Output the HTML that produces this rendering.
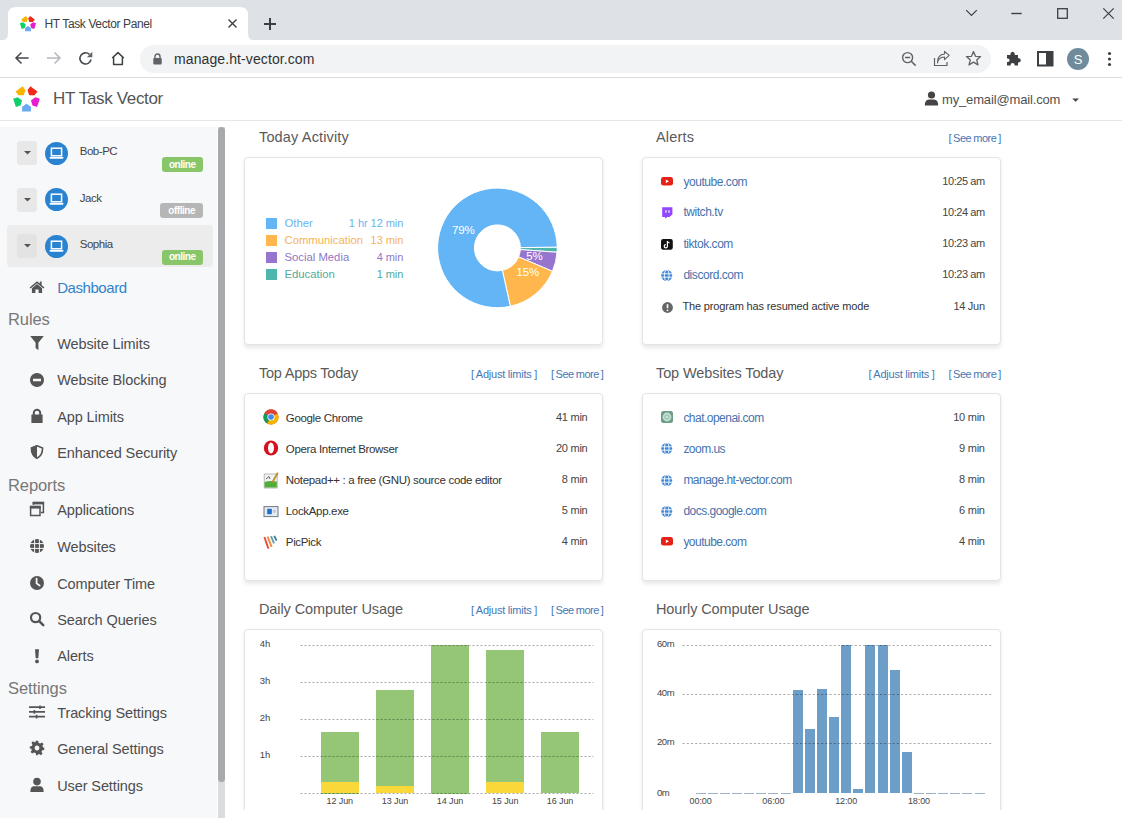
<!DOCTYPE html><html><head><meta charset="utf-8"><style>
*{box-sizing:border-box;margin:0;padding:0}
html,body{width:1122px;height:821px;overflow:hidden;background:#fff;font-family:"Liberation Sans",sans-serif;position:relative}
.t{position:absolute;white-space:nowrap;line-height:normal}
.b{position:absolute}
.s{position:absolute;overflow:visible}
</style></head><body><svg width="0" height="0" style="position:absolute">
<defs>
<symbol id="i-home" viewBox="0 0 16 16"><path fill="#555" d="M8 2.2 L0.6 8.4 L1.6 9.5 L8 4.2 L14.4 9.5 L15.4 8.4 L12.6 6.1 L12.6 2.6 L10.8 2.6 L10.8 4.6 Z M2.9 9.3 L8 5.1 L13.1 9.3 L13.1 14 L9.6 14 L9.6 10.6 L6.4 10.6 L6.4 14 L2.9 14 Z"/></symbol>
<symbol id="i-filter" viewBox="0 0 16 16"><path fill="#555" d="M1.2 1 L14.8 1 L9.4 7.8 L9.4 15.2 L6.6 13 L6.6 7.8 Z"/></symbol>
<symbol id="i-minus" viewBox="0 0 16 16"><path fill="#555" fill-rule="evenodd" d="M8 1 A7 7 0 1 1 7.99 1 Z M4 6.8 L12 6.8 L12 9.2 L4 9.2 Z"/></symbol>
<symbol id="i-lock" viewBox="0 0 16 16"><path fill="#555" d="M2.4 7.2 Q2.4 6.6 3 6.6 L13 6.6 Q13.6 6.6 13.6 7.2 L13.6 14.4 Q13.6 15 13 15 L3 15 Q2.4 15 2.4 14.4 Z"/><path fill="none" stroke="#555" stroke-width="2" d="M4.8 7 L4.8 5 A3.2 3.2 0 0 1 11.2 5 L11.2 7"/></symbol>
<symbol id="i-shield" viewBox="0 0 16 16"><path fill="none" stroke="#555" stroke-width="1.6" d="M8 1.8 L13.6 4 C13.6 9 11.4 12.6 8 14.2 C4.6 12.6 2.4 9 2.4 4 Z"/><path fill="#555" d="M8 1 L2 3.4 C2 9.4 4.4 13.2 8 15 Z"/></symbol>
<symbol id="i-apps" viewBox="0 0 16 16"><path fill="none" stroke="#555" stroke-width="1.5" d="M1.6 5.6 L11 5.6 L11 14.6 L1.6 14.6 Z"/><path fill="#555" d="M0.9 4.9 L11.7 4.9 L11.7 7.6 L0.9 7.6 Z"/><path fill="none" stroke="#555" stroke-width="1.5" d="M4.4 3.8 L4.4 1.6 L14.4 1.6 L14.4 11.4 L12 11.4"/><path fill="#555" d="M3.7 0.9 L15.1 0.9 L15.1 3.4 L3.7 3.4 Z"/></symbol>
<symbol id="i-globe" viewBox="0 0 16 16"><circle cx="8" cy="8" r="7" fill="#555"/><path fill="none" stroke="#f7f8fa" stroke-width="1" d="M1 5.6 L15 5.6 M1 10.4 L15 10.4 M5.6 1 L5.6 15 M10.4 1 L10.4 15"/></symbol>
<symbol id="i-clock" viewBox="0 0 16 16"><circle cx="8" cy="8" r="7" fill="#555"/><path fill="none" stroke="#f7f8fa" stroke-width="1.8" stroke-linecap="round" d="M7.6 3.6 L7.6 8.4 L10.6 10.6"/></symbol>
<symbol id="i-search" viewBox="0 0 16 16"><circle cx="6.6" cy="6.6" r="4.6" fill="none" stroke="#555" stroke-width="2.2"/><path stroke="#555" stroke-width="2.6" stroke-linecap="round" d="M10.2 10.2 L14.2 14.2"/></symbol>
<symbol id="i-excl" viewBox="0 0 16 16"><path fill="#555" d="M6 1.2 L10 1.2 L9.3 10.2 L6.7 10.2 Z"/><circle cx="8" cy="13.4" r="1.9" fill="#555"/></symbol>
<symbol id="i-sliders" viewBox="0 0 16 16"><path stroke="#555" stroke-width="1.7" d="M0 3.2 L16 3.2 M0 7.9 L16 7.9 M0 12.6 L16 12.6"/><path stroke="#555" stroke-width="1.6" d="M11 1.4 L11 5 M5.4 6.1 L5.4 9.7 M7.6 10.8 L7.6 14.4"/></symbol>
<symbol id="i-cog" viewBox="0 0 16 16"><path fill="#555" fill-rule="evenodd" d="M6.8 0.8 L9.2 0.8 L9.6 2.9 L11.2 3.6 L13 2.4 L14.6 4 L13.4 5.8 L14.1 7.4 L15.2 7.6 L15.2 9.9 L13.2 10.3 L12.5 11.9 L13.6 13.6 L11.9 15.2 L10.2 14 L8.9 14.6 L8.7 15.2 L7.3 15.2 L6.6 13.1 L4.9 12.4 L3.2 13.6 L1.6 12 L2.8 10.2 L2.1 8.6 L0.8 8.4 L0.8 6.6 L2.8 6.1 L3.5 4.5 L2.4 2.8 L4 1.2 L5.8 2.4 L6.4 2.1 Z M8 5.6 A2.4 2.4 0 1 0 8.01 5.6 Z"/></symbol>
<symbol id="i-user" viewBox="0 0 16 16"><circle cx="8" cy="4.6" r="3.8" fill="#555"/><path fill="#555" d="M1.4 14 C1.4 10.6 3.4 9.2 5.2 9.2 L10.8 9.2 C12.6 9.2 14.6 10.6 14.6 14 L14.6 15 L1.4 15 Z"/></symbol>
<symbol id="i-laptop" viewBox="0 0 16 16"><path fill="#fff" d="M3 3 L13 3 L13 10 L3 10 Z M4.2 4.2 L4.2 8.8 L11.8 8.8 L11.8 4.2 Z" fill-rule="evenodd"/><path fill="#fff" d="M1.5 10.6 L14.5 10.6 L14.5 11.4 Q14.5 12.2 13.7 12.2 L2.3 12.2 Q1.5 12.2 1.5 11.4 Z"/></symbol>
</defs></svg>
<div class="b" style="left:0px;top:0px;width:1122px;height:40px;background:#dee1e6;"></div>
<svg class="s" style="left:0px;top:0px" width="260" height="41" viewBox="0 0 260 41"><path fill="#fff" d="M0 41 Q8 41 8 33 L8 15 Q8 7 16 7 L240 7 Q248 7 248 15 L248 33 Q248 41 256 41 Z"/></svg>
<div class="b" style="left:0px;top:40px;width:1122px;height:37px;background:#fff;"></div>
<div class="b" style="left:0px;top:77px;width:1122px;height:1px;background:#dadce0;"></div>
<svg class="s" style="left:20px;top:16px" width="16" height="16" viewBox="0 0 16 16"><g transform="translate(8,7.8) rotate(-126) scale(0.6) translate(8.2,0)"><path d="M-4.4 0 L-1 -4.9 L4.4 -4.9 L4.4 4.9 L-1 4.9 Z" fill="#f7b500"/></g><g transform="translate(8,7.8) rotate(-54) scale(0.6) translate(8.2,0)"><path d="M-4.4 0 L-1 -4.9 L4.4 -4.9 L4.4 4.9 L-1 4.9 Z" fill="#ee2a1b"/></g><g transform="translate(8,7.8) rotate(18) scale(0.6) translate(8.2,0)"><path d="M-4.4 0 L-1 -4.9 L4.4 -4.9 L4.4 4.9 L-1 4.9 Z" fill="#e81ccf"/></g><g transform="translate(8,7.8) rotate(90) scale(0.6) translate(8.2,0)"><path d="M-4.4 0 L-1 -4.9 L4.4 -4.9 L4.4 4.9 L-1 4.9 Z" fill="#6aaaf0"/></g><g transform="translate(8,7.8) rotate(162) scale(0.6) translate(8.2,0)"><path d="M-4.4 0 L-1 -4.9 L4.4 -4.9 L4.4 4.9 L-1 4.9 Z" fill="#0fcf6a"/></g></svg>
<div class="t" style="top:16.75px;font-size:12px;color:#3c4043;left:44.60px;letter-spacing:-0.385px">HT Task Vector Panel</div>
<svg class="s" style="left:227px;top:18px" width="11" height="11" viewBox="0 0 11 11"><path d="M1.5 1.5 L9.5 9.5 M9.5 1.5 L1.5 9.5" stroke="#3c4043" stroke-width="1.4"/></svg>
<svg class="s" style="left:263px;top:17px" width="14" height="14" viewBox="0 0 14 14"><path d="M7 1 L7 13 M1 7 L13 7" stroke="#3c4043" stroke-width="2"/></svg>
<svg class="s" style="left:965px;top:8px" width="13" height="10" viewBox="0 0 13 10"><path d="M1.2 2.2 L6.5 7.5 L11.8 2.2" fill="none" stroke="#3c4043" stroke-width="1.2"/></svg>
<svg class="s" style="left:1011px;top:12px" width="11" height="3" viewBox="0 0 11 3"><path d="M0.3 1.5 L10.7 1.5" stroke="#3c4043" stroke-width="1.4"/></svg>
<svg class="s" style="left:1057px;top:8px" width="11" height="11" viewBox="0 0 11 11"><rect x="0.7" y="0.7" width="9.6" height="9.6" fill="none" stroke="#3c4043" stroke-width="1.3"/></svg>
<svg class="s" style="left:1102px;top:7px" width="13" height="13" viewBox="0 0 13 13"><path d="M1.3 1.3 L11.7 11.7 M11.7 1.3 L1.3 11.7" stroke="#3c4043" stroke-width="1.2"/></svg>
<svg class="s" style="left:14px;top:51px" width="16" height="14" viewBox="0 0 16 14"><path d="M14.6 7 L2 7 M7.5 1.5 L2 7 L7.5 12.5" fill="none" stroke="#45484c" stroke-width="1.5"/></svg>
<svg class="s" style="left:46px;top:51px" width="16" height="14" viewBox="0 0 16 14"><path d="M1 7 L14 7 M8.5 1.5 L14 7 L8.5 12.5" fill="none" stroke="#b5b8bc" stroke-width="1.5"/></svg>
<svg class="s" style="left:78px;top:51px" width="16" height="15" viewBox="0 0 16 15"><path d="M13 8.5 A5.6 5.6 0 1 1 11.4 3.4" fill="none" stroke="#45484c" stroke-width="1.6"/><path d="M14.3 0.8 L14.3 6.2 L8.9 6.2 Z" fill="#5f6368"/></svg>
<svg class="s" style="left:110px;top:51px" width="16" height="15" viewBox="0 0 16 15"><path d="M2.2 7 L8 1.6 L13.8 7 M3.6 6 L3.6 13.6 L12.4 13.6 L12.4 6" fill="none" stroke="#3c4043" stroke-width="1.5" stroke-linejoin="round"/></svg>
<div class="b" style="left:140px;top:45px;width:851px;height:28px;background:#f1f3f4;border-radius:14px"></div>
<svg class="s" style="left:152px;top:53px" width="11" height="12" viewBox="0 0 11 12"><path d="M3 5 L3 3.5 A2.5 2.5 0 0 1 8 3.5 L8 5" fill="none" stroke="#5f6368" stroke-width="1.4"/><rect x="1.3" y="5" width="8.4" height="6.5" rx="1" fill="#5f6368"/></svg>
<div class="t" style="top:51.31px;font-size:14px;color:#303134;left:174.00px;letter-spacing:0.1px">manage.ht-vector.com</div>
<svg class="s" style="left:901px;top:51px" width="16" height="16" viewBox="0 0 16 16"><circle cx="6.6" cy="6.6" r="5" fill="none" stroke="#5f6368" stroke-width="1.4"/><path d="M4 6.6 L9.2 6.6 M10.3 10.3 L14.6 14.6" stroke="#5f6368" stroke-width="1.5"/></svg>
<svg class="s" style="left:933px;top:51px" width="18" height="16" viewBox="0 0 18 16"><path d="M1.5 7 L1.5 14.5 L14 14.5 L14 11" fill="none" stroke="#5f6368" stroke-width="1.2"/><path d="M4.5 12 Q5 6.2 11.5 6 L11.5 8.6 L16.2 4.4 L11.5 0.4 L11.5 3 Q4.2 3.6 4.5 12 Z" fill="none" stroke="#5f6368" stroke-width="1.1" stroke-linejoin="round"/></svg>
<svg class="s" style="left:965px;top:50px" width="17" height="17" viewBox="0 0 17 17"><path d="M8.5 1.5 L10.5 6.3 L15.6 6.6 L11.7 9.9 L13 14.9 L8.5 12.1 L4 14.9 L5.3 9.9 L1.4 6.6 L6.5 6.3 Z" fill="none" stroke="#5f6368" stroke-width="1.3" stroke-linejoin="round"/></svg>
<svg class="s" style="left:1005px;top:50px" width="17" height="17" viewBox="0 0 17 17"><path d="M2 5 L5.5 5 Q5 2 7.6 1.8 Q10.2 2 9.7 5 L13 5 L13 8.2 Q15.8 7.8 15.8 10.3 Q15.8 12.8 13 12.4 L13 15.6 L9.5 15.6 Q10 13 7.6 13 Q5.2 13 5.7 15.6 L2 15.6 L2 12 Q4.6 12.4 4.6 10.3 Q4.6 8.2 2 8.6 Z" fill="#3c4043"/></svg>
<svg class="s" style="left:1037px;top:51px" width="17" height="16" viewBox="0 0 17 16"><rect x="1" y="1" width="14.5" height="13.5" fill="none" stroke="#3c4043" stroke-width="2"/><rect x="9" y="1" width="6.5" height="13.5" fill="#3c4043"/></svg>
<svg class="s" style="left:1067px;top:48px" width="22" height="22" viewBox="0 0 22 22"><circle cx="11" cy="11" r="11" fill="#6f8b9c"/></svg>
<div class="t" style="top:52.03px;font-size:13px;color:#fff;left:878.00px;width:400px;text-align:center">S</div>
<svg class="s" style="left:1107px;top:51px" width="5" height="16" viewBox="0 0 5 16"><circle cx="2.5" cy="2.5" r="1.6" fill="#3c4043"/><circle cx="2.5" cy="8" r="1.6" fill="#3c4043"/><circle cx="2.5" cy="13.5" r="1.6" fill="#3c4043"/></svg>
<div class="b" style="left:0px;top:120px;width:1122px;height:1px;background:#e6e6e6;"></div>
<svg class="s" style="left:12px;top:85px" width="29" height="29" viewBox="0 0 29 29"><g transform="translate(14.5,14.0) rotate(-126) scale(0.9) translate(9.6,0)"><path d="M-4.4 0 L-1 -4.9 L4.4 -4.9 L4.4 4.9 L-1 4.9 Z" fill="#f7b500"/></g><g transform="translate(14.5,14.0) rotate(-54) scale(0.9) translate(9.6,0)"><path d="M-4.4 0 L-1 -4.9 L4.4 -4.9 L4.4 4.9 L-1 4.9 Z" fill="#ee2a1b"/></g><g transform="translate(14.5,14.0) rotate(18) scale(0.9) translate(9.6,0)"><path d="M-4.4 0 L-1 -4.9 L4.4 -4.9 L4.4 4.9 L-1 4.9 Z" fill="#e81ccf"/></g><g transform="translate(14.5,14.0) rotate(90) scale(0.9) translate(9.6,0)"><path d="M-4.4 0 L-1 -4.9 L4.4 -4.9 L4.4 4.9 L-1 4.9 Z" fill="#6aaaf0"/></g><g transform="translate(14.5,14.0) rotate(162) scale(0.9) translate(9.6,0)"><path d="M-4.4 0 L-1 -4.9 L4.4 -4.9 L4.4 4.9 L-1 4.9 Z" fill="#0fcf6a"/></g></svg>
<div class="t" style="top:88.54px;font-size:17px;color:#555;left:53.00px;letter-spacing:-0.34px">HT Task Vector</div>
<svg class="s" style="left:924px;top:91px" width="15" height="15" viewBox="0 0 15 15"><circle cx="7.5" cy="4" r="3.6" fill="#444"/><path d="M0.8 14.6 Q0.8 8.6 5 8.6 L10 8.6 Q14.2 8.6 14.2 14.6 Z" fill="#444"/></svg>
<div class="t" style="top:92.03px;font-size:13px;color:#505050;left:942.00px;letter-spacing:-0.15px">my_email@mail.com</div>
<svg class="s" style="left:1072px;top:98px" width="8" height="5" viewBox="0 0 8 5"><path d="M0.2 0.4 L7 0.4 L3.6 3.8 Z" fill="#444"/></svg>
<div class="b" style="left:0px;top:127px;width:217px;height:691px;background:#f7f8fa;"></div>
<div class="b" style="left:218px;top:127px;width:7px;height:691px;background:#dcdcdc;"></div>
<div class="b" style="left:218px;top:127px;width:7px;height:655px;background:#a8a9ac;border-radius:3.5px"></div>
<div class="b" style="left:17px;top:141px;width:20px;height:24px;background:#e8e8e8;border-radius:3px"></div>
<svg class="s" style="left:24px;top:151px" width="7" height="4" viewBox="0 0 7 4"><path d="M0 0 L7 0 L3.5 3.5 Z" fill="#555"/></svg>
<svg class="s" style="left:45.1px;top:141.5px" width="23" height="23" viewBox="0 0 23 23"><circle cx="11.5" cy="11.5" r="11.5" fill="#2a83d1"/><rect x="6.4" y="6.2" width="10.2" height="7.6" fill="none" stroke="#fff" stroke-width="1.5"/><path d="M4.6 15 L18.4 15 L18.4 15.8 Q18.4 16.8 17.4 16.8 L5.6 16.8 Q4.6 16.8 4.6 15.8 Z" fill="#fff"/></svg>
<div class="t" style="top:145.01px;font-size:11.5px;color:#444;left:79.70px;letter-spacing:-0.46px">Bob-PC</div>
<div class="b" style="left:161.5px;top:157px;width:41.5px;height:15px;background:#88c669;border-radius:3px"></div>
<div class="t" style="top:158.79px;font-size:10px;color:#fff;left:-17.75px;width:400px;text-align:center;letter-spacing:-0.45px;font-weight:bold">online</div>
<div class="b" style="left:17px;top:187.5px;width:20px;height:24px;background:#e8e8e8;border-radius:3px"></div>
<svg class="s" style="left:24px;top:197.5px" width="7" height="4" viewBox="0 0 7 4"><path d="M0 0 L7 0 L3.5 3.5 Z" fill="#555"/></svg>
<svg class="s" style="left:45.1px;top:188.0px" width="23" height="23" viewBox="0 0 23 23"><circle cx="11.5" cy="11.5" r="11.5" fill="#2a83d1"/><rect x="6.4" y="6.2" width="10.2" height="7.6" fill="none" stroke="#fff" stroke-width="1.5"/><path d="M4.6 15 L18.4 15 L18.4 15.8 Q18.4 16.8 17.4 16.8 L5.6 16.8 Q4.6 16.8 4.6 15.8 Z" fill="#fff"/></svg>
<div class="t" style="top:191.61px;font-size:11.5px;color:#444;left:79.70px;letter-spacing:-0.46px">Jack</div>
<div class="b" style="left:160.2px;top:203.3px;width:43px;height:15px;background:#b6b6b6;border-radius:3px"></div>
<div class="t" style="top:205.09px;font-size:10px;color:#fff;left:-18.30px;width:400px;text-align:center;letter-spacing:-0.45px;font-weight:bold">offline</div>
<div class="b" style="left:7px;top:225px;width:206px;height:42px;background:#ececec;border-radius:4px"></div>
<div class="b" style="left:17px;top:234px;width:20px;height:24px;background:#e3e3e3;border-radius:3px"></div>
<svg class="s" style="left:24px;top:244px" width="7" height="4" viewBox="0 0 7 4"><path d="M0 0 L7 0 L3.5 3.5 Z" fill="#555"/></svg>
<svg class="s" style="left:45.1px;top:234.5px" width="23" height="23" viewBox="0 0 23 23"><circle cx="11.5" cy="11.5" r="11.5" fill="#2a83d1"/><rect x="6.4" y="6.2" width="10.2" height="7.6" fill="none" stroke="#fff" stroke-width="1.5"/><path d="M4.6 15 L18.4 15 L18.4 15.8 Q18.4 16.8 17.4 16.8 L5.6 16.8 Q4.6 16.8 4.6 15.8 Z" fill="#fff"/></svg>
<div class="t" style="top:238.01px;font-size:11.5px;color:#444;left:79.70px;letter-spacing:-0.46px">Sophia</div>
<div class="b" style="left:161.5px;top:249.7px;width:41.5px;height:15px;background:#88c669;border-radius:3px"></div>
<div class="t" style="top:251.49px;font-size:10px;color:#fff;left:-17.75px;width:400px;text-align:center;letter-spacing:-0.45px;font-weight:bold">online</div>
<div class="t" style="top:278.88px;font-size:15px;color:#3282c8;left:57.20px;letter-spacing:-0.44px">Dashboard</div>
<svg class="s" style="left:28.5px;top:278.9px" width="16" height="16" viewBox="0 0 16 16"><use href="#i-home"/></svg>
<div class="t" style="top:335.95px;font-size:14.5px;color:#4d4d4d;left:57.20px;letter-spacing:-0.1px">Website Limits</div>
<svg class="s" style="left:28.5px;top:334.9px" width="16" height="16" viewBox="0 0 16 16"><use href="#i-filter"/></svg>
<div class="t" style="top:372.45px;font-size:14.5px;color:#4d4d4d;left:57.20px;letter-spacing:-0.1px">Website Blocking</div>
<svg class="s" style="left:28.5px;top:372.2px" width="16" height="16" viewBox="0 0 16 16"><use href="#i-minus"/></svg>
<div class="t" style="top:409.15px;font-size:14.5px;color:#4d4d4d;left:57.20px;letter-spacing:-0.1px">App Limits</div>
<svg class="s" style="left:28.5px;top:408px" width="16" height="16" viewBox="0 0 16 16"><use href="#i-lock"/></svg>
<div class="t" style="top:445.25px;font-size:14.5px;color:#4d4d4d;left:57.20px;letter-spacing:-0.1px">Enhanced Security</div>
<svg class="s" style="left:28.5px;top:443.6px" width="16" height="16" viewBox="0 0 16 16"><use href="#i-shield"/></svg>
<div class="t" style="top:501.55px;font-size:14.5px;color:#4d4d4d;left:57.20px;letter-spacing:-0.1px">Applications</div>
<svg class="s" style="left:28.5px;top:501.3px" width="16" height="16" viewBox="0 0 16 16"><use href="#i-apps"/></svg>
<div class="t" style="top:538.55px;font-size:14.5px;color:#4d4d4d;left:57.20px;letter-spacing:-0.1px">Websites</div>
<svg class="s" style="left:28.5px;top:538.1px" width="16" height="16" viewBox="0 0 16 16"><use href="#i-globe"/></svg>
<div class="t" style="top:575.55px;font-size:14.5px;color:#4d4d4d;left:57.20px;letter-spacing:-0.1px">Computer Time</div>
<svg class="s" style="left:28.5px;top:575.1px" width="16" height="16" viewBox="0 0 16 16"><use href="#i-clock"/></svg>
<div class="t" style="top:611.65px;font-size:14.5px;color:#4d4d4d;left:57.20px;letter-spacing:-0.1px">Search Queries</div>
<svg class="s" style="left:28.5px;top:611.3px" width="16" height="16" viewBox="0 0 16 16"><use href="#i-search"/></svg>
<div class="t" style="top:648.15px;font-size:14.5px;color:#4d4d4d;left:57.20px;letter-spacing:-0.1px">Alerts</div>
<svg class="s" style="left:28.5px;top:647.7px" width="16" height="16" viewBox="0 0 16 16"><use href="#i-excl"/></svg>
<div class="t" style="top:704.65px;font-size:14.5px;color:#4d4d4d;left:57.20px;letter-spacing:-0.1px">Tracking Settings</div>
<svg class="s" style="left:28.5px;top:704.2px" width="16" height="16" viewBox="0 0 16 16"><use href="#i-sliders"/></svg>
<div class="t" style="top:741.15px;font-size:14.5px;color:#4d4d4d;left:57.20px;letter-spacing:-0.1px">General Settings</div>
<svg class="s" style="left:28.5px;top:740.1px" width="16" height="16" viewBox="0 0 16 16"><use href="#i-cog"/></svg>
<div class="t" style="top:777.65px;font-size:14.5px;color:#4d4d4d;left:57.20px;letter-spacing:-0.1px">User Settings</div>
<svg class="s" style="left:28.5px;top:776.6px" width="16" height="16" viewBox="0 0 16 16"><use href="#i-user"/></svg>
<div class="t" style="top:309.60px;font-size:16.5px;color:#777;left:8.00px;letter-spacing:-0.1px">Rules</div>
<div class="t" style="top:476.20px;font-size:16.5px;color:#777;left:8.00px;letter-spacing:-0.1px">Reports</div>
<div class="t" style="top:678.60px;font-size:16.5px;color:#777;left:8.00px;letter-spacing:-0.1px">Settings</div>
<div style="position:absolute;left:226px;top:121px;width:896px;height:689px;overflow:hidden">
<div style="position:absolute;left:-226px;top:-121px;width:1122px;height:821px">
<div class="b" style="left:244px;top:157px;width:359px;height:188px;background:#fff;border:1px solid #e4e4e4;border-radius:4px;box-shadow:0 2.5px 4px rgba(0,0,0,0.09)"></div>
<div class="b" style="left:642px;top:157px;width:359px;height:188px;background:#fff;border:1px solid #e4e4e4;border-radius:4px;box-shadow:0 2.5px 4px rgba(0,0,0,0.09)"></div>
<div class="b" style="left:244px;top:393px;width:359px;height:188px;background:#fff;border:1px solid #e4e4e4;border-radius:4px;box-shadow:0 2.5px 4px rgba(0,0,0,0.09)"></div>
<div class="b" style="left:642px;top:393px;width:359px;height:188px;background:#fff;border:1px solid #e4e4e4;border-radius:4px;box-shadow:0 2.5px 4px rgba(0,0,0,0.09)"></div>
<div class="b" style="left:244px;top:629px;width:359px;height:300px;background:#fff;border:1px solid #e4e4e4;border-radius:4px;box-shadow:0 2.5px 4px rgba(0,0,0,0.09)"></div>
<div class="b" style="left:642px;top:629px;width:359px;height:300px;background:#fff;border:1px solid #e4e4e4;border-radius:4px;box-shadow:0 2.5px 4px rgba(0,0,0,0.09)"></div>
<div class="t" style="top:128.85px;font-size:14.5px;color:#5a5a5a;left:259.00px;letter-spacing:0.15px">Today Activity</div>
<div class="t" style="top:128.85px;font-size:14.5px;color:#5a5a5a;left:656.00px;letter-spacing:0.2px">Alerts</div>
<div class="t" style="top:365.15px;font-size:14.5px;color:#5a5a5a;left:259.00px;letter-spacing:-0.23px">Top Apps Today</div>
<div class="t" style="top:365.15px;font-size:14.5px;color:#5a5a5a;left:656.00px;letter-spacing:-0.1px">Top Websites Today</div>
<div class="t" style="top:600.75px;font-size:14.5px;color:#5a5a5a;left:259.00px;letter-spacing:-0.1px">Daily Computer Usage</div>
<div class="t" style="top:600.75px;font-size:14.5px;color:#5a5a5a;left:656.00px;letter-spacing:-0.1px">Hourly Computer Usage</div>
<div class="t" style="top:132.17px;font-size:11px;color:#4677b3;right:121.00px;letter-spacing:-0.42px;word-spacing:-0.8px">[ See more ]</div>
<div class="t" style="top:368.37px;font-size:11px;color:#4677b3;right:518.50px;letter-spacing:-0.42px;word-spacing:-0.8px">[ See more ]</div>
<div class="t" style="top:368.37px;font-size:11px;color:#4677b3;right:585.00px;letter-spacing:-0.2px;word-spacing:-0.3px">[ Adjust limits ]</div>
<div class="t" style="top:368.37px;font-size:11px;color:#4677b3;right:121.00px;letter-spacing:-0.42px;word-spacing:-0.8px">[ See more ]</div>
<div class="t" style="top:368.37px;font-size:11px;color:#4677b3;right:187.50px;letter-spacing:-0.2px;word-spacing:-0.3px">[ Adjust limits ]</div>
<div class="t" style="top:603.87px;font-size:11px;color:#4677b3;right:518.50px;letter-spacing:-0.42px;word-spacing:-0.8px">[ See more ]</div>
<div class="t" style="top:603.87px;font-size:11px;color:#4677b3;right:585.00px;letter-spacing:-0.2px;word-spacing:-0.3px">[ Adjust limits ]</div>
<div class="b" style="left:266px;top:218px;width:11px;height:11px;background:#64b5f6;"></div>
<div class="t" style="top:216.99px;font-size:11.3px;color:#6ab4ee;left:284.50px;letter-spacing:0px">Other</div>
<div class="t" style="top:217.27px;font-size:11px;color:#6ab4ee;right:718.70px;letter-spacing:-0.05px">1 hr 12 min</div>
<div class="b" style="left:266px;top:235px;width:11px;height:11px;background:#ffb74d;"></div>
<div class="t" style="top:233.99px;font-size:11.3px;color:#f7b35a;left:284.50px;letter-spacing:0px">Communication</div>
<div class="t" style="top:234.27px;font-size:11px;color:#f7b35a;right:718.70px;letter-spacing:-0.05px">13 min</div>
<div class="b" style="left:266px;top:252px;width:11px;height:11px;background:#9575cd;"></div>
<div class="t" style="top:250.99px;font-size:11.3px;color:#8f78c4;left:284.50px;letter-spacing:0px">Social Media</div>
<div class="t" style="top:251.27px;font-size:11px;color:#8f78c4;right:718.70px;letter-spacing:-0.05px">4 min</div>
<div class="b" style="left:266px;top:269px;width:11px;height:11px;background:#4db6ac;"></div>
<div class="t" style="top:267.99px;font-size:11.3px;color:#52aaa1;left:284.50px;letter-spacing:0px">Education</div>
<div class="t" style="top:268.27px;font-size:11px;color:#52aaa1;right:718.70px;letter-spacing:-0.05px">1 min</div>
<svg class="s" style="left:0;top:0" width="1122" height="821"><path d="M557.19 247.07 A59.8 59.8 0 0 1 557.04 252.28 L520.34 249.58 A23 23 0 0 0 520.40 247.58 Z" fill="#4db6ac" stroke="#fff" stroke-width="1"/><path d="M557.04 252.28 A59.8 59.8 0 0 1 552.45 271.27 L518.57 256.89 A23 23 0 0 0 520.34 249.58 Z" fill="#9575cd" stroke="#fff" stroke-width="1"/><path d="M552.45 271.27 A59.8 59.8 0 0 1 510.34 306.28 L502.38 270.35 A23 23 0 0 0 518.57 256.89 Z" fill="#ffb74d" stroke="#fff" stroke-width="1"/><path d="M510.34 306.28 A59.8 59.8 0 1 1 557.19 247.07 L520.40 247.58 A23 23 0 1 0 502.38 270.35 Z" fill="#64b5f6" stroke="#fff" stroke-width="1"/></svg>
<div class="t" style="top:223.71px;font-size:11.5px;color:#fff;left:263.30px;width:400px;text-align:center;letter-spacing:-0.2px">79%</div>
<div class="t" style="top:250.21px;font-size:11.5px;color:#fff;left:334.40px;width:400px;text-align:center;letter-spacing:-0.2px">5%</div>
<div class="t" style="top:265.51px;font-size:11.5px;color:#fff;left:327.80px;width:400px;text-align:center;letter-spacing:-0.2px">15%</div>
<svg class="s" style="left:661px;top:177px" width="12" height="9" viewBox="0 0 12 9"><rect x="0" y="0" width="12" height="8.6" rx="2.4" fill="#e62117"/><path d="M4.8 2.4 L8 4.3 L4.8 6.2 Z" fill="#fff"/></svg>
<div class="t" style="top:174.55px;font-size:12px;color:#4673ad;left:683.40px;letter-spacing:-0.45px">youtube.com</div>
<div class="t" style="top:174.67px;font-size:11px;color:#444;right:137.30px;letter-spacing:-0.44px">10:25 am</div>
<svg class="s" style="left:661px;top:207px" width="12" height="12" viewBox="0 0 12 12"><path d="M1.2 0.3 L11.4 0.3 L11.4 7.4 L8.4 10 L6.2 10 L4 11.8 L4 10 L1.2 10 Z" fill="#9146ff"/><path d="M5 3.2 L5 5.8 M8 3.2 L8 5.8" stroke="#fff" stroke-width="1.2"/></svg>
<div class="t" style="top:205.45px;font-size:12px;color:#4673ad;left:683.40px;letter-spacing:-0.45px">twitch.tv</div>
<div class="t" style="top:205.57px;font-size:11px;color:#444;right:137.30px;letter-spacing:-0.44px">10:24 am</div>
<svg class="s" style="left:661px;top:239px" width="12" height="11" viewBox="0 0 12 11"><rect x="0" y="0" width="11.8" height="10.8" rx="2.2" fill="#111"/><path d="M6.4 2 L6.4 7.2 A1.6 1.6 0 1 1 4.8 5.6" fill="none" stroke="#fff" stroke-width="1.2"/><path d="M6.4 2.2 Q6.8 3.8 8.6 4" fill="none" stroke="#fff" stroke-width="1.1"/></svg>
<div class="t" style="top:236.95px;font-size:12px;color:#4673ad;left:683.40px;letter-spacing:-0.45px">tiktok.com</div>
<div class="t" style="top:237.07px;font-size:11px;color:#444;right:137.30px;letter-spacing:-0.44px">10:23 am</div>
<svg class="s" style="left:661px;top:270px" width="12" height="12" viewBox="0 0 12 12"><circle cx="5.75" cy="5.5" r="5.5" fill="#3f88d8"/><ellipse cx="5.75" cy="5.5" rx="2.3" ry="5.3" fill="none" stroke="#fff" stroke-width="0.9"/><path d="M0.4 3.8 L11.1 3.8 M0.4 7.2 L11.1 7.2" stroke="#fff" stroke-width="0.9"/></svg>
<div class="t" style="top:268.15px;font-size:12px;color:#4673ad;left:683.40px;letter-spacing:-0.45px">discord.com</div>
<div class="t" style="top:268.27px;font-size:11px;color:#444;right:137.30px;letter-spacing:-0.44px">10:23 am</div>
<svg class="s" style="left:661.5px;top:301.5px" width="11" height="11" viewBox="0 0 11 11"><circle cx="5.5" cy="5.5" r="5.4" fill="#666"/><path d="M5.5 2.2 L5.5 6.2" stroke="#fff" stroke-width="1.6"/><circle cx="5.5" cy="8.3" r="0.9" fill="#fff"/></svg>
<div class="t" style="top:300.27px;font-size:11px;color:#333;left:682.40px;letter-spacing:-0.15px">The program has resumed active mode</div>
<div class="t" style="top:300.47px;font-size:11px;color:#444;right:137.30px;letter-spacing:-0.3px">14 Jun</div>
<svg class="s" style="left:263px;top:409px" width="16" height="16" viewBox="0 0 16 16"><circle cx="8" cy="8" r="7.6" fill="#db4437"/><path d="M8 8 L1.4 4.2 A7.6 7.6 0 0 0 4.2 14.6 Z" fill="#0f9d58"/><path d="M8 8 L4.2 14.6 A7.6 7.6 0 0 0 15.6 8 L 14.6 4.2 Z" fill="#f4b400"/><path d="M8 8 L1.4 4.2 A7.6 7.6 0 0 1 14.6 4.2 Z" fill="#db4437"/><circle cx="8" cy="8" r="3.6" fill="#fff"/><circle cx="8" cy="8" r="2.8" fill="#4285f4"/></svg>
<div class="t" style="top:411.51px;font-size:11.5px;color:#333;left:285.80px;letter-spacing:-0.33px">Google Chrome</div>
<div class="t" style="top:410.77px;font-size:11px;color:#444;right:534.50px;letter-spacing:-0.25px">41 min</div>
<svg class="s" style="left:263px;top:440px" width="16" height="16" viewBox="0 0 16 16"><ellipse cx="8" cy="8" rx="7.2" ry="7.4" fill="#d5111e"/><ellipse cx="8" cy="8" rx="3" ry="5.4" fill="#fff"/></svg>
<div class="t" style="top:442.51px;font-size:11.5px;color:#333;left:285.80px;letter-spacing:-0.33px">Opera Internet Browser</div>
<div class="t" style="top:441.77px;font-size:11px;color:#444;right:534.50px;letter-spacing:-0.25px">20 min</div>
<svg class="s" style="left:263px;top:472px" width="16" height="16" viewBox="0 0 16 16"><rect x="1.2" y="2" width="13" height="14" fill="#f2f2f2" stroke="#aaa" stroke-width="0.8"/><path d="M1.6 10 Q6 8.5 13.8 9.5 L13.8 15.6 L1.6 15.6 Z" fill="#4fae3a"/><path d="M3 7 L6 4.5 L7 7" fill="none" stroke="#666" stroke-width="1"/><path d="M9 11 L14.8 0.8" stroke="#b8902a" stroke-width="1.8"/></svg>
<div class="t" style="top:473.91px;font-size:11.5px;color:#333;left:285.80px;letter-spacing:-0.33px">Notepad++ : a free (GNU) source code editor</div>
<div class="t" style="top:473.17px;font-size:11px;color:#444;right:534.50px;letter-spacing:-0.25px">8 min</div>
<svg class="s" style="left:263px;top:503px" width="16" height="16" viewBox="0 0 16 16"><rect x="1" y="3.6" width="14" height="10" fill="#e4ebf2" stroke="#6f7780" stroke-width="1"/><rect x="4.2" y="5.8" width="4.6" height="5.4" fill="#1f6fd0"/><rect x="10.2" y="6.8" width="2.4" height="3" fill="#b9c6d4"/></svg>
<div class="t" style="top:505.11px;font-size:11.5px;color:#333;left:285.80px;letter-spacing:-0.33px">LockApp.exe</div>
<div class="t" style="top:504.37px;font-size:11px;color:#444;right:534.50px;letter-spacing:-0.25px">5 min</div>
<svg class="s" style="left:263px;top:534px" width="16" height="16" viewBox="0 0 16 16"><path d="M1.4 3 L5.4 14.6" stroke="#e2503a" stroke-width="1.9"/><path d="M4.6 2.6 L8.6 12.8" stroke="#ee8a3a" stroke-width="1.9"/><path d="M8 2.2 L11 9.4" stroke="#6a9cb0" stroke-width="1.9"/><path d="M11.2 1.8 L13.6 6.6" stroke="#3f7f95" stroke-width="1.9"/></svg>
<div class="t" style="top:536.11px;font-size:11.5px;color:#333;left:285.80px;letter-spacing:-0.33px">PicPick</div>
<div class="t" style="top:535.37px;font-size:11px;color:#444;right:534.50px;letter-spacing:-0.25px">4 min</div>
<svg class="s" style="left:661px;top:411px" width="12" height="12" viewBox="0 0 12 12"><rect x="0" y="0" width="12" height="12" rx="2.5" fill="#6f9c88"/><circle cx="6" cy="6" r="4.4" fill="#c3e2d5"/><circle cx="6" cy="6" r="2.2" fill="none" stroke="#86ad9b" stroke-width="0.8"/></svg>
<div class="t" style="top:410.75px;font-size:12px;color:#4673ad;left:683.40px;letter-spacing:-0.52px">chat.openai.com</div>
<div class="t" style="top:410.77px;font-size:11px;color:#444;right:137.30px;letter-spacing:-0.25px">10 min</div>
<svg class="s" style="left:661px;top:443px" width="12" height="12" viewBox="0 0 12 12"><circle cx="5.75" cy="5.5" r="5.5" fill="#3f88d8"/><ellipse cx="5.75" cy="5.5" rx="2.3" ry="5.3" fill="none" stroke="#fff" stroke-width="0.9"/><path d="M0.4 3.8 L11.1 3.8 M0.4 7.2 L11.1 7.2" stroke="#fff" stroke-width="0.9"/></svg>
<div class="t" style="top:441.75px;font-size:12px;color:#4673ad;left:683.40px;letter-spacing:-0.52px">zoom.us</div>
<div class="t" style="top:441.77px;font-size:11px;color:#444;right:137.30px;letter-spacing:-0.25px">9 min</div>
<svg class="s" style="left:661px;top:475px" width="12" height="12" viewBox="0 0 12 12"><circle cx="5.75" cy="5.5" r="5.5" fill="#3f88d8"/><ellipse cx="5.75" cy="5.5" rx="2.3" ry="5.3" fill="none" stroke="#fff" stroke-width="0.9"/><path d="M0.4 3.8 L11.1 3.8 M0.4 7.2 L11.1 7.2" stroke="#fff" stroke-width="0.9"/></svg>
<div class="t" style="top:473.15px;font-size:12px;color:#4673ad;left:683.40px;letter-spacing:-0.52px">manage.ht-vector.com</div>
<div class="t" style="top:473.17px;font-size:11px;color:#444;right:137.30px;letter-spacing:-0.25px">8 min</div>
<svg class="s" style="left:661px;top:506px" width="12" height="12" viewBox="0 0 12 12"><circle cx="5.75" cy="5.5" r="5.5" fill="#3f88d8"/><ellipse cx="5.75" cy="5.5" rx="2.3" ry="5.3" fill="none" stroke="#fff" stroke-width="0.9"/><path d="M0.4 3.8 L11.1 3.8 M0.4 7.2 L11.1 7.2" stroke="#fff" stroke-width="0.9"/></svg>
<div class="t" style="top:504.35px;font-size:12px;color:#4673ad;left:683.40px;letter-spacing:-0.52px">docs.google.com</div>
<div class="t" style="top:504.37px;font-size:11px;color:#444;right:137.30px;letter-spacing:-0.25px">6 min</div>
<svg class="s" style="left:661px;top:537px" width="12" height="9" viewBox="0 0 12 9"><rect x="0" y="0" width="12" height="8.6" rx="2.4" fill="#e62117"/><path d="M4.8 2.4 L8 4.3 L4.8 6.2 Z" fill="#fff"/></svg>
<div class="t" style="top:535.35px;font-size:12px;color:#4673ad;left:683.40px;letter-spacing:-0.52px">youtube.com</div>
<div class="t" style="top:535.37px;font-size:11px;color:#444;right:137.30px;letter-spacing:-0.25px">4 min</div>
<div class="t" style="top:637.55px;font-size:9.5px;color:#444;left:259.80px;letter-spacing:-0.2px">4h</div>
<div class="t" style="top:674.55px;font-size:9.5px;color:#444;left:259.80px;letter-spacing:-0.2px">3h</div>
<div class="t" style="top:711.55px;font-size:9.5px;color:#444;left:259.80px;letter-spacing:-0.2px">2h</div>
<div class="t" style="top:748.55px;font-size:9.5px;color:#444;left:259.80px;letter-spacing:-0.2px">1h</div>
<div class="b" style="left:320.8px;top:731.5px;width:37.8px;height:62.0px;background:#94c675;"></div>
<div class="b" style="left:320.8px;top:782.2px;width:37.8px;height:11.299999999999955px;background:#fbd83a;"></div>
<div class="t" style="top:795.71px;font-size:9px;color:#444;left:139.80px;width:400px;text-align:center;letter-spacing:-0.1px">12 Jun</div>
<div class="b" style="left:376px;top:689.8px;width:37.8px;height:103.70000000000005px;background:#94c675;"></div>
<div class="b" style="left:376px;top:786.4px;width:37.8px;height:7.100000000000023px;background:#fbd83a;"></div>
<div class="t" style="top:795.71px;font-size:9px;color:#444;left:195.00px;width:400px;text-align:center;letter-spacing:-0.1px">13 Jun</div>
<div class="b" style="left:431px;top:645px;width:37.8px;height:148.5px;background:#94c675;"></div>
<div class="t" style="top:795.71px;font-size:9px;color:#444;left:250.00px;width:400px;text-align:center;letter-spacing:-0.1px">14 Jun</div>
<div class="b" style="left:486.2px;top:649.8px;width:37.8px;height:143.70000000000005px;background:#94c675;"></div>
<div class="b" style="left:486.2px;top:782.2px;width:37.8px;height:11.299999999999955px;background:#fbd83a;"></div>
<div class="t" style="top:795.71px;font-size:9px;color:#444;left:305.20px;width:400px;text-align:center;letter-spacing:-0.1px">15 Jun</div>
<div class="b" style="left:541px;top:731.8px;width:37.8px;height:61.700000000000045px;background:#94c675;"></div>
<div class="t" style="top:795.71px;font-size:9px;color:#444;left:360.00px;width:400px;text-align:center;letter-spacing:-0.1px">16 Jun</div>
<svg class="s" style="left:0;top:0" width="1122" height="821"><path d="M300.5 645.5 L593.5 645.5" stroke="rgba(0,0,0,0.34)" stroke-width="1" stroke-dasharray="2 2"/><path d="M300.5 682.5 L593.5 682.5" stroke="rgba(0,0,0,0.34)" stroke-width="1" stroke-dasharray="2 2"/><path d="M300.5 719.5 L593.5 719.5" stroke="rgba(0,0,0,0.34)" stroke-width="1" stroke-dasharray="2 2"/><path d="M300.5 756.5 L593.5 756.5" stroke="rgba(0,0,0,0.34)" stroke-width="1" stroke-dasharray="2 2"/><path d="M300.5 793.5 L593.5 793.5" stroke="rgba(0,0,0,0.34)" stroke-width="1" stroke-dasharray="2 2"/></svg>
<div class="t" style="top:637.85px;font-size:9.5px;color:#444;left:657.00px;letter-spacing:-0.45px">60m</div>
<div class="t" style="top:687.05px;font-size:9.5px;color:#444;left:657.00px;letter-spacing:-0.45px">40m</div>
<div class="t" style="top:736.25px;font-size:9.5px;color:#444;left:657.00px;letter-spacing:-0.45px">20m</div>
<div class="t" style="top:786.75px;font-size:9.5px;color:#444;left:657.00px;letter-spacing:-0.45px">0m</div>
<div class="b" style="left:695.6px;top:792.8px;width:10px;height:1.5px;background:#9db2c6;"></div>
<div class="b" style="left:707.73px;top:792.8px;width:10px;height:1.5px;background:#9db2c6;"></div>
<div class="b" style="left:719.86px;top:792.8px;width:10px;height:1.5px;background:#9db2c6;"></div>
<div class="b" style="left:731.99px;top:792.8px;width:10px;height:1.5px;background:#9db2c6;"></div>
<div class="b" style="left:744.12px;top:792.8px;width:10px;height:1.5px;background:#9db2c6;"></div>
<div class="b" style="left:756.25px;top:792.8px;width:10px;height:1.5px;background:#9db2c6;"></div>
<div class="b" style="left:768.38px;top:792.8px;width:10px;height:1.5px;background:#9db2c6;"></div>
<div class="b" style="left:780.51px;top:792.8px;width:10px;height:1.5px;background:#9db2c6;"></div>
<div class="b" style="left:792.64px;top:690.1px;width:10px;height:102.89999999999998px;background:#6c9ec8;"></div>
<div class="b" style="left:804.77px;top:729px;width:10px;height:64px;background:#6c9ec8;"></div>
<div class="b" style="left:816.9px;top:689px;width:10px;height:104px;background:#6c9ec8;"></div>
<div class="b" style="left:829.03px;top:717.2px;width:10px;height:75.79999999999995px;background:#6c9ec8;"></div>
<div class="b" style="left:841.16px;top:645px;width:10px;height:148px;background:#6c9ec8;"></div>
<div class="b" style="left:853.29px;top:789.2px;width:10px;height:3.7999999999999545px;background:#6c9ec8;"></div>
<div class="b" style="left:865.42px;top:645px;width:10px;height:148px;background:#6c9ec8;"></div>
<div class="b" style="left:877.55px;top:645px;width:10px;height:148px;background:#6c9ec8;"></div>
<div class="b" style="left:889.68px;top:670px;width:10px;height:123px;background:#6c9ec8;"></div>
<div class="b" style="left:901.81px;top:752px;width:10px;height:41px;background:#6c9ec8;"></div>
<div class="b" style="left:913.94px;top:792.8px;width:10px;height:1.5px;background:#9db2c6;"></div>
<div class="b" style="left:926.07px;top:792.8px;width:10px;height:1.5px;background:#9db2c6;"></div>
<div class="b" style="left:938.2px;top:792.8px;width:10px;height:1.5px;background:#9db2c6;"></div>
<div class="b" style="left:950.33px;top:792.8px;width:10px;height:1.5px;background:#9db2c6;"></div>
<div class="b" style="left:962.46px;top:792.8px;width:10px;height:1.5px;background:#9db2c6;"></div>
<div class="b" style="left:974.59px;top:792.8px;width:10px;height:1.5px;background:#9db2c6;"></div>
<div class="t" style="top:795.71px;font-size:9px;color:#444;left:500.60px;width:400px;text-align:center;letter-spacing:-0.1px">00:00</div>
<div class="t" style="top:795.71px;font-size:9px;color:#444;left:573.38px;width:400px;text-align:center;letter-spacing:-0.1px">06:00</div>
<div class="t" style="top:795.71px;font-size:9px;color:#444;left:646.16px;width:400px;text-align:center;letter-spacing:-0.1px">12:00</div>
<div class="t" style="top:795.71px;font-size:9px;color:#444;left:718.94px;width:400px;text-align:center;letter-spacing:-0.1px">18:00</div>
<svg class="s" style="left:0;top:0" width="1122" height="821"><path d="M682.5 645.5 L991.5 645.5" stroke="rgba(0,0,0,0.32)" stroke-width="1" stroke-dasharray="2.2 2"/><path d="M682.5 694.5 L991.5 694.5" stroke="rgba(0,0,0,0.32)" stroke-width="1" stroke-dasharray="2.2 2"/><path d="M682.5 743.5 L991.5 743.5" stroke="rgba(0,0,0,0.32)" stroke-width="1" stroke-dasharray="2.2 2"/></svg>
</div></div></body></html>
